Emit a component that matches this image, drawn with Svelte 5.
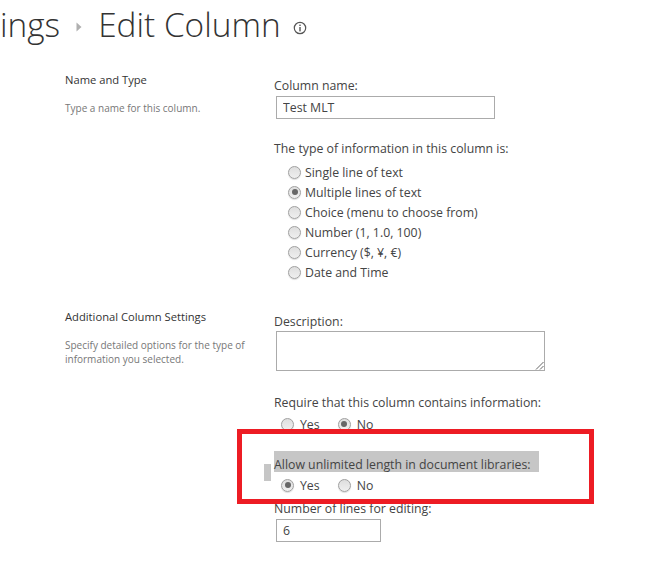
<script>
  const types = [
    ['Single line of text', false],
    ['Multiple lines of text', true],
    ['Choice (menu to choose from)', false],
    ['Number (1, 1.0, 100)', false],
    ['Currency ($, ¥, €)', false],
    ['Date and Time', false]
  ];
</script>

{#snippet radio(label, on, cls)}
  <span class="opt {cls}"><span class="dot" class:on={on}></span>{label}</span>
{/snippet}

<div class="page">
  <header class="title">
    <span>ings</span>
    <svg class="arrow" width="6" height="10" viewBox="0 0 6 10"><path d="M0.5 0.5l5 4.5-5 4.5z" fill="#b0b0b0"/></svg>
    <span class="edit">Edit Column</span>
    <svg class="info" width="14" height="14" viewBox="0 0 14 14" fill="none">
      <circle cx="7" cy="7" r="5.7" stroke="#555" stroke-width="1.2"/>
      <rect x="6.3" y="6" width="1.4" height="4.4" fill="#555"/>
      <rect x="6.3" y="3.6" width="1.4" height="1.4" fill="#555"/>
    </svg>
  </header>

  <section class="row first">
    <div class="side">
      <h3>Name and Type</h3>
      <p>Type a name for this column.</p>
    </div>
    <div class="main">
      <label class="lbl" for="cname">Column name:</label>
      <input id="cname" class="name" value="Test MLT" />
      <div class="lbl typehead">The type of information in this column is:</div>
      <div class="types">
        {#each types as [label, on]}
          {@render radio(label, on, '')}
        {/each}
      </div>
    </div>
  </section>

  <section class="row second">
    <div class="side">
      <h3>Additional Column Settings</h3>
      <p>Specify detailed options for the type of<br />information you selected.</p>
    </div>
    <div class="main">
      <div class="lbl">Description:</div>
      <div class="area">
        <svg width="9" height="9" viewBox="0 0 9 9"><path d="M8.5 1L1 8.5M8.5 5L5 8.5" stroke="#666" fill="none"/></svg>
      </div>
      <div class="lbl req">Require that this column contains information:</div>
      <div class="pair">
        {@render radio('Yes', false, 'yes')}
        {@render radio('No', true, '')}
      </div>
      <div class="allow">
        <span class="mark"></span>
        <div class="lbl sel">Allow unlimited length in document libraries:</div>
      </div>
      <div class="pair">
        {@render radio('Yes', true, 'yes')}
        {@render radio('No', false, '')}
      </div>
      <div class="lbl lines">Number of lines for editing:</div>
      <input class="num" value="6" />
    </div>
  </section>

  <div class="redbox"></div>
</div>

<style>
  :global(body) {
    margin: 0;
    background: #fff;
  }
  .page {
    position: relative;
    width: 652px;
    height: 583px;
    overflow: hidden;
    font-family: "Open Sans", "Noto Sans", sans-serif;
    font-size: 12.3px;
    color: #444;
  }
  .title {
    display: flex;
    align-items: center;
    height: 48px;
    font-size: 33.4px;
    font-weight: 300;
    color: #333;
  }
  .arrow {
    margin: 5px 16px 0 16px;
  }
  .info {
    margin: 7px 0 0 12px;
  }
  .row {
    display: grid;
    grid-template-columns: 209px 1fr;
    padding-left: 65px;
  }
  .first {
    margin-top: 23px;
  }
  .second {
    margin-top: 25px;
  }
  .second .side {
    padding-top: 1px;
  }
  h3 {
    margin: 0;
    font-size: 11.2px;
    font-weight: 400;
    line-height: 18px;
    color: #333;
  }
  .side p {
    margin: 12px 0 0;
    font-size: 10px;
    line-height: 14px;
    color: #777;
  }
  .main {
    display: flex;
    flex-direction: column;
    align-items: flex-start;
    padding-top: 5px;
  }
  .lbl {
    line-height: 20px;
    display: block;
  }
  input {
    box-sizing: border-box;
    border: 1px solid #ababab;
    font: inherit;
    color: #444;
    padding: 0 6px;
    outline: none;
    margin: 0 0 0 2px;
  }
  .name {
    width: 219px;
    height: 23px;
    margin-left: 2px;
  }
  .typehead {
    margin-top: 20px;
  }
  .types {
    display: flex;
    flex-direction: column;
    margin-top: 3px;
    padding-left: 14px;
  }
  .opt {
    display: flex;
    align-items: center;
    gap: 4px;
    height: 20px;
  }
  .pair .opt {
    gap: 6px;
  }
  .dot {
    box-sizing: border-box;
    width: 13px;
    height: 13px;
    border-radius: 50%;
    border: 1px solid #a0a0a0;
    background: linear-gradient(#dedede, #efefef);
    box-shadow: 0 1px 1px #ddd;
    position: relative;
  }
  .dot.on::after {
    content: "";
    position: absolute;
    inset: 2.5px;
    border-radius: 50%;
    background: #666;
  }
  .area {
    box-sizing: border-box;
    width: 269px;
    height: 40px;
    margin: -1px 0 0 2px;
    border: 1px solid #ababab;
    display: flex;
    align-items: flex-end;
    justify-content: flex-end;
  }
  .area svg {
    display: block;
  }
  .req {
    margin-top: 22px;
  }
  .pair {
    display: flex;
    gap: 18px;
    padding-left: 7px;
    margin-top: 1px;
  }
  .opt.yes {
    min-width: 37px;
  }
  .allow {
    position: relative;
    margin-top: 17px;
  }
  .sel {
    background: #c6c6c6;
    height: 21px;
    line-height: 27px;
    padding-right: 8px;
  }
  .mark {
    position: absolute;
    left: -10px;
    top: 13px;
    width: 7px;
    height: 17px;
    background: #c6c6c6;
  }
  .allow + .pair {
    margin-top: 3px;
  }
  .lines {
    margin-top: 5px;
    line-height: 18px;
  }
  .num {
    width: 105px;
    height: 23px;
    margin-left: 2px;
    margin-top: 1px;
  }
  .redbox {
    position: absolute;
    left: 237px;
    top: 429px;
    width: 347px;
    height: 65px;
    border: 5px solid #ed1c24;
  }
</style>
